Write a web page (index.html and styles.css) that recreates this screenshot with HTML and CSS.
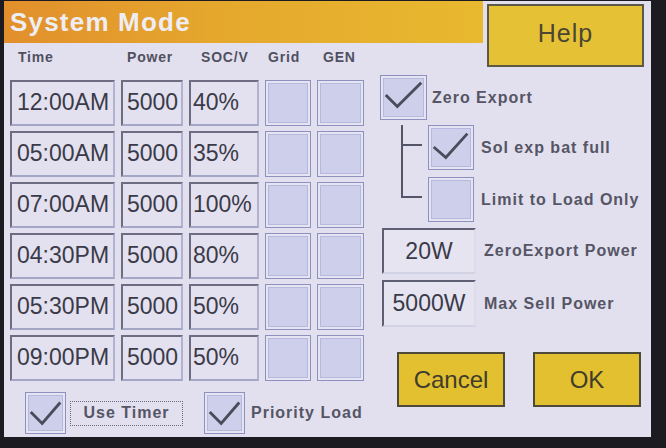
FILE: index.html
```html
<!DOCTYPE html>
<html lang="en">
<head>
  <meta charset="UTF-8" />
  <title>System Mode</title>
  <link rel="stylesheet" href="styles.css">
</head>
<body>
  <div class="screen">

    <div class="topbar">
      <div class="title">System Mode</div>
      <div class="help">Help</div>
    </div>

    <div class="main">
      <!-- Timer table -->
      <div class="left">
        <div class="table">
          <div class="head time">Time</div>
          <div class="head power">Power</div>
          <div class="head soc">SOC/V</div>
          <div class="head grid">Grid</div>
          <div class="head gen">GEN</div>

          <div class="field time">12:00AM</div><div class="field power">5000</div><div class="field soc">40%</div><div class="cb"></div><div class="cb"></div>
          <div class="field time">05:00AM</div><div class="field power">5000</div><div class="field soc">35%</div><div class="cb"></div><div class="cb"></div>
          <div class="field time">07:00AM</div><div class="field power">5000</div><div class="field soc">100%</div><div class="cb"></div><div class="cb"></div>
          <div class="field time">04:30PM</div><div class="field power">5000</div><div class="field soc">80%</div><div class="cb"></div><div class="cb"></div>
          <div class="field time">05:30PM</div><div class="field power">5000</div><div class="field soc">50%</div><div class="cb"></div><div class="cb"></div>
          <div class="field time">09:00PM</div><div class="field power">5000</div><div class="field soc">50%</div><div class="cb"></div><div class="cb"></div>
        </div>

        <div class="bottom">
          <div class="cb small checked">
            <svg viewBox="0 0 41 42" preserveAspectRatio="none"><polyline points="5,20 17,32 36,10" /></svg>
          </div>
          <div class="focus">Use Timer</div>
          <div class="cb small checked priority">
            <svg viewBox="0 0 41 42" preserveAspectRatio="none"><polyline points="5,20 17,32 36,10" /></svg>
          </div>
          <div class="label">Priority Load</div>
        </div>
      </div>

      <!-- Export options -->
      <div class="right">
        <div class="opt">
          <div class="cb big checked">
            <svg viewBox="0 0 47 45" preserveAspectRatio="none"><polyline points="5,20 17,32 42,7" /></svg>
          </div>
          <div class="label">Zero Export</div>
        </div>

        <div class="sub">
          <svg class="tree" width="28" height="98" viewBox="0 0 28 98">
            <path d="M2 0 V73 M2 20 H22 M2 72 H22" />
          </svg>
          <div class="sub-list">
            <div class="opt">
              <div class="cb big checked">
                <svg viewBox="0 0 47 45" preserveAspectRatio="none"><polyline points="5,22 18,33 41,8" /></svg>
              </div>
              <div class="label">Sol exp bat full</div>
            </div>
            <div class="opt">
              <div class="cb big"></div>
              <div class="label">Limit to Load Only</div>
            </div>
          </div>
        </div>

        <div class="values">
          <div class="opt">
            <div class="value">20W</div>
            <div class="label">ZeroExport Power</div>
          </div>
          <div class="opt">
            <div class="value">5000W</div>
            <div class="label">Max Sell Power</div>
          </div>
        </div>

        <div class="buttons">
          <div class="btn">Cancel</div>
          <div class="btn">OK</div>
        </div>
      </div>
    </div>

  </div>
</body>
</html>
```

FILE: styles.css
```css
* {
  box-sizing: border-box;
  margin: 0;
  padding: 0;
}

body {
  background: #1c1b21;
  font-family: 'Liberation Sans', Arial, sans-serif;
  width: 666px;
  height: 448px;
  overflow: hidden;
}

.screen {
  width: 647px;
  height: 436px;
  margin: 1px 0 0 4px;
  background: #e2e0ee;
  display: flex;
  flex-direction: column;
}

/* --- Top bar --- */
.topbar {
  display: flex;
  align-items: flex-start;
  height: 42px;
}

.title {
  width: 479px;
  height: 42px;
  background: linear-gradient(to right, #e28f2c, #e5a82d 45%, #e8b92f);
  color: #eeedf4;
  font-size: 26px;
  font-weight: bold;
  letter-spacing: 1.2px;
  padding: 6px 0 0 6px;
}

.help {
  width: 157px;
  height: 63px;
  margin: 3px 0 0 4px;
  background: #e5c136;
  border: 2px solid #5c5946;
  color: #4a4632;
  font-size: 25px;
  letter-spacing: 1px;
  display: flex;
  justify-content: center;
  align-items: center;
  padding-bottom: 4px;
}

/* --- Main area --- */
.main {
  display: flex;
  padding-left: 6px;
}

.left {
  width: 355px;
}

.table {
  display: grid;
  grid-template-columns: 105px 62px 70px 46px 47px;
  grid-template-rows: 32px repeat(6, 46px);
  column-gap: 6px;
  row-gap: 5px;
}

.table .head {
  align-self: center;
  margin-top: -4px;
  color: #505060;
  font-size: 14px;
  font-weight: bold;
  letter-spacing: 0.8px;
}

.head.time { padding-left: 8px; }
.head.power { padding-left: 6px; }
.head.soc { padding-left: 12px; }
.head.grid { padding-left: 3px; }
.head.gen { padding-left: 6px; }

.field {
  border: 2px solid;
  border-color: #6d6c80 #b0b2d0 #a4a6c6 #6d6c80;
  background: #e3e1ef;
  color: #3a3a48;
  font-size: 23px;
  display: flex;
  align-items: center;
  padding-bottom: 2px;
}

.field.time { padding-left: 5px; }
.field.power { padding-left: 4px; }
.field.soc { padding-left: 2px; }

.cb {
  border: 1px solid #8e91bd;
  background: #cdcfeb;
  box-shadow: inset 0 0 0 2px #e4e4f3, inset 0 0 0 3px #b7b9dc;
}

.cb svg {
  display: block;
  width: 100%;
  height: 100%;
}

.cb polyline {
  fill: none;
  stroke: #4b4b5c;
  stroke-width: 3;
}

.cb.big {
  width: 47px;
  height: 45px;
  flex-shrink: 0;
}

.cb.small {
  width: 41px;
  height: 42px;
  flex-shrink: 0;
}

.label {
  color: #555565;
  font-size: 16px;
  font-weight: bold;
  letter-spacing: 1px;
  white-space: nowrap;
}

.bottom {
  display: flex;
  align-items: center;
  margin-top: 11px;
  padding-left: 15px;
}

.focus {
  width: 113px;
  height: 25px;
  margin-left: 4px;
  border: 1px dotted #6a6a7a;
  color: #555565;
  font-size: 16px;
  font-weight: bold;
  letter-spacing: 1px;
  display: flex;
  align-items: center;
  justify-content: center;
}

.cb.priority {
  margin-left: 21px;
}

.bottom .label {
  margin-left: 6px;
}

/* --- Right panel --- */
.right {
  margin-left: 15px;
  padding-top: 32px;
}

.opt {
  display: flex;
  align-items: center;
}

.opt .label {
  margin-left: 5px;
}

.sub {
  display: flex;
  margin-top: 5px;
}

.tree {
  margin: 0 0 0 20px;
  flex-shrink: 0;
}

.tree path {
  stroke: #55556a;
  stroke-width: 2;
  fill: none;
}

.sub-list {
  display: flex;
  flex-direction: column;
  gap: 7px;
}

.sub-list .cb.big {
  width: 46px;
}

.sub-list .label {
  margin-left: 7px;
}

.values {
  display: flex;
  flex-direction: column;
  gap: 6px;
  margin-top: 5px;
}

.value {
  width: 94px;
  height: 46px;
  margin-left: 2px;
  border: 2px solid;
  border-color: #5f5f74 #dcdcec #d3d3e6 #5f5f74;
  background: #e6e4f1;
  color: #3a3a48;
  font-size: 23px;
  display: flex;
  align-items: center;
  justify-content: center;
}

.values .opt:last-child .value {
  height: 47px;
}

.values .label {
  margin-left: 8px;
}

.buttons {
  display: flex;
  gap: 28px;
  margin: 25px 0 0 17px;
}

.btn {
  width: 108px;
  height: 55px;
  background: #e2c030;
  border: 2px solid #4d4a3c;
  color: #3f3c2c;
  font-size: 24px;
  display: flex;
  align-items: center;
  justify-content: center;
}
```
